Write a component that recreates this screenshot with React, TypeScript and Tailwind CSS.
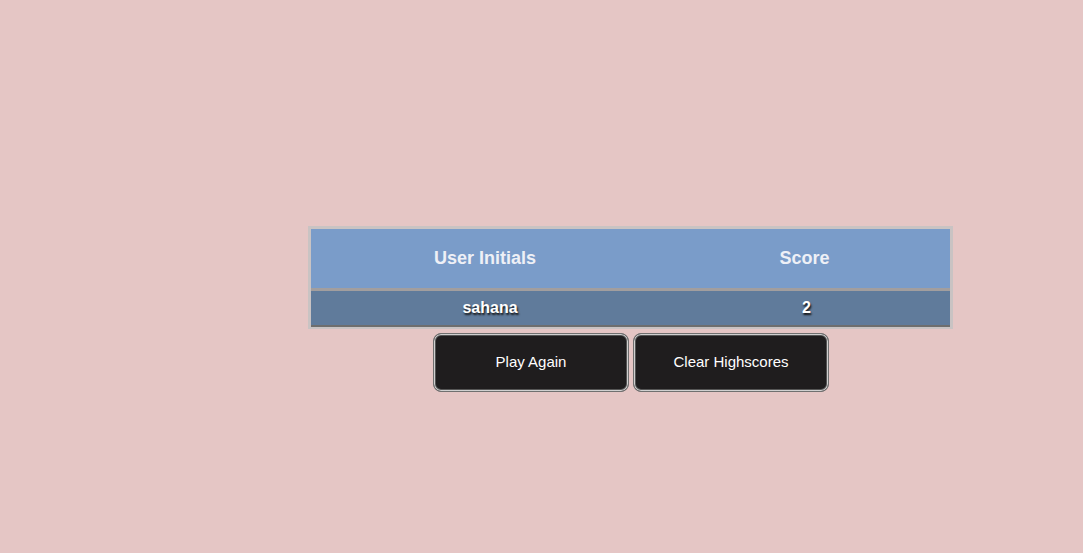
export default function App() {
  const scores = [{ initials: "sahana", score: 2 }];

  return (
    <div
      className="min-h-screen w-full bg-[#e5c6c5] pt-[226px] pl-[308px]"
      style={{ fontFamily: '"Liberation Sans", Arial, sans-serif' }}
    >
      <div className="w-[645px]">
        {/* highscore table */}
        <div className="border-[3px] border-b-2 border-[#c9c3c3]">
          <div className="flex h-[59px] bg-[#7a9cc9] text-[18px] font-bold text-[#eef0f6]">
            <div className="w-[348px] flex items-center justify-center">User Initials</div>
            <div className="flex-1 flex items-center justify-center">Score</div>
          </div>
          <div className="h-[3px] bg-[#a29e9e]" />
          {scores.map((s) => (
            <div
              key={s.initials}
              className="flex h-[34px] bg-[#607b9b] text-[16px] font-bold text-white [text-shadow:1px_2px_2px_#111]"
            >
              <div className="w-[348px] pl-[10px] flex items-center justify-center">{s.initials}</div>
              <div className="flex-1 pl-[4px] flex items-center justify-center">{s.score}</div>
            </div>
          ))}
          <div className="h-[2px] bg-[#6e6e6e]" />
        </div>

        {/* buttons */}
        <div className="mt-[4px] flex justify-center gap-[4px] pl-[1px]">
          <button className="w-[196px] h-[59px] rounded-lg border border-[#707070] bg-[#1f1d1e] text-[15px] text-white shadow-[inset_0_0_0_1px_#d0d0d0,inset_0_0_0_2px_#555]">
            Play Again
          </button>
          <button className="w-[196px] h-[59px] rounded-lg border border-[#707070] bg-[#1f1d1e] text-[15px] text-white shadow-[inset_0_0_0_1px_#d0d0d0,inset_0_0_0_2px_#555]">
            Clear Highscores
          </button>
        </div>
      </div>
    </div>
  );
}
